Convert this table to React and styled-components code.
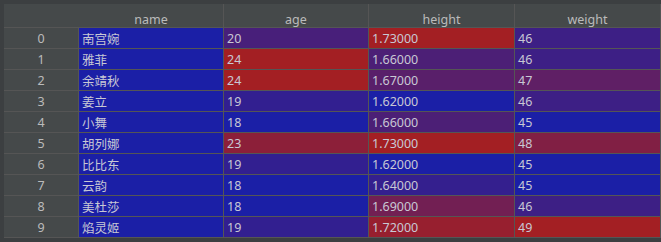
import React from 'react'
import styled, { createGlobalStyle } from 'styled-components'

const rows = [
    ['南宫婉', 20, 1.73, 46],
    ['雅菲', 24, 1.66, 46],
    ['余靖秋', 24, 1.67, 47],
    ['姜立', 19, 1.62, 46],
    ['小舞', 18, 1.66, 45],
    ['胡列娜', 23, 1.73, 48],
    ['比比东', 19, 1.62, 45],
    ['云韵', 18, 1.64, 45],
    ['美杜莎', 18, 1.69, 46],
    ['焰灵姬', 19, 1.72, 49],
];

const LOW = [27, 31, 166];
const HIGH = [163, 31, 35];

function shade(value, col) {
    const list = rows.map(r => r[col]);
    const min = Math.min(...list);
    const max = Math.max(...list);
    const t = max === min ? 0 : (value - min) / (max - min);
    const c = LOW.map((l, i) => Math.round(l + (HIGH[i] - l) * t));
    return `rgb(${c[0]}, ${c[1]}, ${c[2]})`;
}

const GlobalStyle = createGlobalStyle`
    html, body {
        margin: 0;
        background: #3c3f41;
    }
`;

function App() {
    return (
        <>
            <GlobalStyle />
            <Frame>
                <Table>
                    <HeadCell $blank />
                    <HeadCell>name</HeadCell>
                    <HeadCell>age</HeadCell>
                    <HeadCell>height</HeadCell>
                    <HeadCell>weight</HeadCell>
                    {rows.map((r, i) => (
                        <React.Fragment key={i}>
                            <IndexCell>{i}</IndexCell>
                            <Cell style={{ background: `rgb(${LOW.join(',')})` }}>{r[0]}</Cell>
                            <Cell style={{ background: shade(r[1], 1) }}>{r[1]}</Cell>
                            <Cell style={{ background: shade(r[2], 2) }}>{r[2].toFixed(5)}</Cell>
                            <Cell style={{ background: shade(r[3], 3) }}>{r[3]}</Cell>
                        </React.Fragment>
                    ))}
                </Table>
            </Frame>
        </>
    )
}

export default App


const Frame = styled.div`
    width: 661px;
    height: 242px;
    box-sizing: border-box;
    padding: 4px 0 0 4px;
    background: #3c3f41;
    overflow: hidden;
`;

const Table = styled.div`
    display: grid;
    grid-template-columns: 75px 145px 145px 146px 146px;
    grid-auto-rows: 21px;
    grid-template-rows: 24px;
    font-family: "Noto Sans", "Noto Sans CJK SC", sans-serif;
    font-size: 12.5px;
    color: #bbbbbb;
`;

const HeadCell = styled.div`
    background: #45494a;
    border-bottom: 1px solid #555555;
    border-right: ${p => p.$blank ? 'none' : '1px solid #555555'};
    display: flex;
    align-items: flex-end;
    justify-content: center;
    padding-bottom: 0;
    line-height: 15px;
    box-sizing: border-box;
`;

const IndexCell = styled.div`
    background: #45494a;
    border-bottom: 1px solid #555555;
    border-right: 1px solid #555555;
    display: flex;
    align-items: center;
    justify-content: center;
    box-sizing: border-box;
`;

const Cell = styled.div`
    border-bottom: 1px solid #555555;
    border-right: 1px solid #555555;
    display: flex;
    align-items: center;
    padding-left: 3px;
    color: #c8c8d4;
    box-sizing: border-box;
`;
